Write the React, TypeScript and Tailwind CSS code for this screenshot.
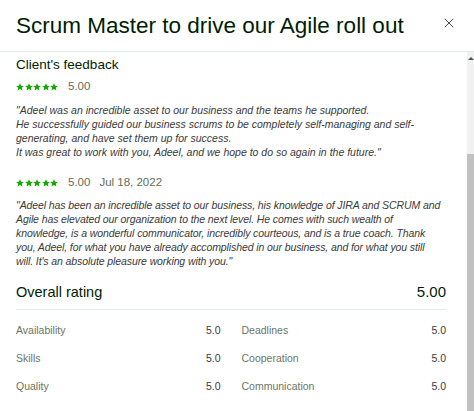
import { X } from "lucide-react";

const Stars = () => (
  <div className="flex gap-[0.5px]">
    {Array.from({ length: 5 }).map((_, i) => (
      <svg key={i} width="8" height="8" viewBox="0 0 24 24">
        <path
          d="M12 0.5l3.4 7.4 8.1.9-6 5.5 1.8 8L12 18.2l-7.3 4.1 1.8-8-6-5.5 8.1-.9z"
          fill="#14a800"
        />
      </svg>
    ))}
  </div>
);

const ratings = [
  ["Availability", "5.0", "Deadlines", "5.0"],
  ["Skills", "5.0", "Cooperation", "5.0"],
  ["Quality", "5.0", "Communication", "5.0"],
];

const App = () => {
  return (
    <div
      className="w-[474px] h-[411px] bg-white flex flex-col overflow-hidden text-[#001e00]"
      style={{ fontFamily: '"Liberation Sans", Arial, sans-serif' }}
    >
      <div className="h-[52px] shrink-0 border-b border-[#e4ebe4] flex items-center justify-between pl-4 pr-[17px]">
        <h1 className="text-[22.5px] leading-none pt-[2px]">
          Scrum Master to drive our Agile roll out
        </h1>
        <X size={16} strokeWidth={1.4} className="text-[#3d3d3d] -mt-[6px]" />
      </div>

      <div className="flex flex-1 min-h-0">
        <div className="flex-1 pl-4 pr-[21px] pt-[4px]">
          <div className="text-[13.5px] leading-[18px]">Client's feedback</div>

          <div className="flex items-center gap-[10px] h-[14px] mt-[6px]">
            <Stars />
            <span className="text-[11.5px] text-[#5e6d55]">5.00</span>
          </div>

          <p className="mt-[9px] text-[10.5px] leading-[14px] italic text-[#3a3a3a] whitespace-nowrap">
            "Adeel was an incredible asset to our business and the teams he supported.
            <br />
            He successfully guided our business scrums to be completely self-managing and self-
            <br />
            generating, and have set them up for success.
            <br />
            It was great to work with you, Adeel, and we hope to do so again in the future."
          </p>

          <div className="flex items-center gap-[10px] h-[14px] mt-[17px]">
            <Stars />
            <span className="text-[11.5px] text-[#5e6d55]">5.00</span>
            <span className="text-[11.5px] text-[#5e6d55] -ml-[1px]">Jul 18, 2022</span>
          </div>

          <p className="mt-[8px] text-[10.5px] leading-[14px] italic text-[#3a3a3a] whitespace-nowrap tracking-[-0.1px]">
            "Adeel has been an incredible asset to our business, his knowledge of JIRA and SCRUM and
            <br />
            Agile has elevated our organization to the next level. He comes with such wealth of
            <br />
            knowledge, is a wonderful communicator, incredibly courteous, and is a true coach. Thank
            <br />
            you, Adeel, for what you have already accomplished in our business, and for what you still
            <br />
            will. It's an absolute pleasure working with you."
          </p>

          <div className="mt-[14px] pb-[7px] border-b border-[#e4ebe4] flex items-center justify-between leading-[20px]">
            <span className="text-[14.5px]">Overall rating</span>
            <span className="text-[15px]">5.00</span>
          </div>

          <div className="mt-[7px] grid grid-cols-2 gap-x-[21px]">
            {ratings.map(([a, av, b, bv]) => (
              <div key={a} className="contents">
                <div className="h-[28px] flex items-center justify-between text-[10.5px]">
                  <span className="text-[#6b7566]">{a}</span>
                  <span className="text-[#3a3a3a]">{av}</span>
                </div>
                <div className="h-[28px] flex items-center justify-between text-[10.5px]">
                  <span className="text-[#6b7566]">{b}</span>
                  <span className="text-[#3a3a3a]">{bv}</span>
                </div>
              </div>
            ))}
          </div>
        </div>

        <div className="w-[7px] shrink-0 bg-[#f1f1f1] flex flex-col">
          <div className="h-[12px] flex items-center justify-center">
            <div className="w-0 h-0 border-l-[3px] border-r-[3px] border-b-[3px] border-l-transparent border-r-transparent border-b-[#505050]" />
          </div>
          <div className="h-[90px]" />
          <div className="flex-1 bg-[#c1c1c1]" />
        </div>
      </div>
    </div>
  );
};

export default App;
